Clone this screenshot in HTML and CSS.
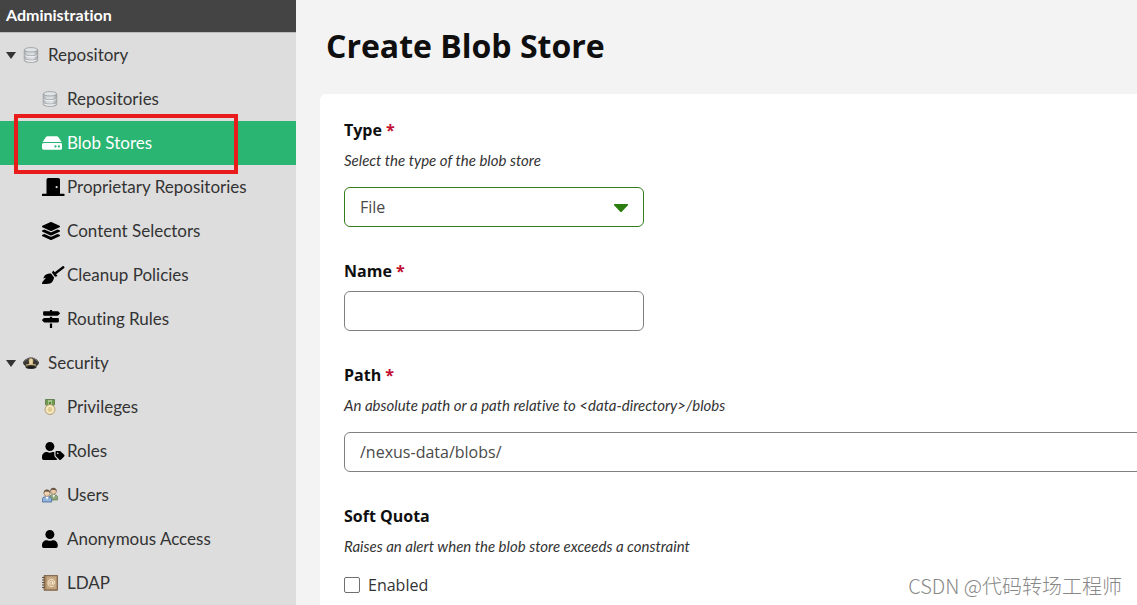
FILE: index.html
```html
<!DOCTYPE html>
<html lang="en">
<head>
<meta charset="utf-8">
<title>Create Blob Store</title>
<link rel="stylesheet" href="styles.css">
</head>
<body>
<svg class="defs" aria-hidden="true">
  <defs>
    <linearGradient id="metal" x1="0" x2="1"><stop offset="0" stop-color="#a9adb1"/><stop offset=".25" stop-color="#d3d7da"/><stop offset=".65" stop-color="#dfe2e5"/><stop offset="1" stop-color="#9b9fa3"/></linearGradient>
    <symbol id="database" viewBox="0 0 16 16">
      <path d="M1.2 3v10.200C1.200 16.300 14.800 16.300 14.800 13.200V3z" fill="url(#metal)" stroke="#96999c" stroke-width=".7"/>
      <path d="M1.500 7.200c1 2 12 2 13 0M1.500 11.500c1 2 12 2 13 0" fill="none" stroke="#a0a4a8" stroke-width=".8"/>
      <path d="M1.700 8.200c1 2 11.600 2 12.600 0M1.700 12.500c1 2 11.600 2 12.600 0" fill="none" stroke="#f5f6f7" stroke-width=".8"/>
      <ellipse cx="8" cy="2.800" rx="6.600" ry="2.200" fill="#e1e4e6" stroke="#96999c" stroke-width=".8"/>
    </symbol>
  </defs>
</svg>
<div class="shell">
  <nav class="sidebar" aria-labelledby="nav-title">
    <h2 class="sidebar-title" id="nav-title">Administration</h2>
    <ul class="tree">
      <li>
        <button class="row group" type="button" aria-expanded="true">
          <svg class="caret" viewBox="0 0 10 7"><path d="M0 0h10L5 7z"/></svg>
          <svg class="icon-small" viewBox="0 0 16 16"><use href="#database"/></svg>
          <span>Repository</span>
        </button>
        <ul class="tree">
          <li><a class="row item" href="#"><span class="slot"><svg class="icon-small" viewBox="0 0 16 16"><use href="#database"/></svg></span>Repositories</a></li>
          <li><a class="row item selected" href="#" aria-current="page"><span class="slot"><svg class="icon" viewBox="0 0 576 512"><path d="M576 304v96c0 26.510-21.490 48-48 48H48c-26.510 0-48-21.490-48-48v-96c0-26.510 21.490-48 48-48h480c26.510 0 48 21.490 48 48zm-48-80a79.557 79.557 0 0 1 30.777 6.165L462.250 85.374A48.003 48.003 0 0 0 422.311 64H153.689a48 48 0 0 0-39.938 21.374L17.223 230.165A79.557 79.557 0 0 1 48 224h480zm-48 96a32 32 0 1 0 0 64 32 32 0 0 0 0-64zm-96 0a32 32 0 1 0 0 64 32 32 0 0 0 0-64z"/></svg></span>Blob Stores</a></li>
          <li><a class="row item" href="#"><span class="slot"><svg class="icon" viewBox="0 0 640 512"><path d="M624 448H512V50.800C512 22.780 490.470 0 464 0H175.990c-26.470 0-48 22.780-48 50.800V448H16c-8.840 0-16 7.160-16 16v32c0 8.840 7.160 16 16 16h608c8.840 0 16-7.160 16-16v-32c0-8.840-7.160-16-16-16zM416 288a32 32 0 1 1 0-64 32 32 0 0 1 0 64z"/></svg></span>Proprietary Repositories</a></li>
          <li><a class="row item" href="#"><span class="slot"><svg class="icon" viewBox="0 0 512 512"><path d="M12.410 148.020l232.940 105.670c6.800 3.090 14.490 3.090 21.290 0l232.940-105.670c16.550-7.510 16.550-32.520 0-40.030L266.650 2.310a25.607 25.607 0 0 0-21.290 0L12.410 107.980c-16.550 7.510-16.550 32.530 0 40.040zm487.180 88.280l-58.090-26.330-161.640 73.270c-7.560 3.430-15.590 5.170-23.860 5.170s-16.290-1.740-23.860-5.170L70.510 209.970l-58.100 26.330c-16.550 7.500-16.550 32.500 0 40l232.940 105.590c6.800 3.080 14.490 3.080 21.290 0L499.590 276.300c16.550-7.500 16.550-32.500 0-40zm0 127.800l-57.870-26.230-161.860 73.370c-7.560 3.430-15.590 5.170-23.860 5.170s-16.290-1.740-23.860-5.170L70.290 337.870 12.410 364.100c-16.550 7.500-16.550 32.500 0 40l232.940 105.590c6.800 3.080 14.490 3.080 21.290 0L499.590 404.100c16.550-7.500 16.550-32.500 0-40z"/></svg></span>Content Selectors</a></li>
          <li><a class="row item" href="#"><span class="slot"><svg class="icon" viewBox="0 0 640 512"><path d="M256.470 216.770l86.730 109.180s-16.600 102.360-76.570 150.120C206.660 523.850 0 510.190 0 510.190s3.800-23.140 11-55.430l94.620-112.170c3.970-4.700-.870-11.620-6.650-9.500l-60.400 22.090c14.440-41.660 32.720-80.040 54.600-97.470 59.970-47.760 163.300-40.940 163.300-40.940zM636.530 31.030l-19.860-25c-5.490-6.900-15.520-8.050-22.410-2.560l-232.480 177.800-34.140-42.970c-5.090-6.410-15.140-5.210-18.590 2.210l-25.330 54.550 86.730 109.180 58.800-12.450c8-1.690 11.420-11.200 6.340-17.600l-34.090-42.920 232.480-177.800c6.890-5.480 8.040-15.530 2.550-22.440z"/></svg></span>Cleanup Policies</a></li>
          <li><a class="row item" href="#"><span class="slot"><svg class="icon" viewBox="0 0 512 512"><path d="M507.310 84.690L464 41.370c-6-6-14.140-9.370-22.630-9.370H288V16c0-8.840-7.160-16-16-16h-32c-8.840 0-16 7.160-16 16v16H56c-13.250 0-24 10.750-24 24v80c0 13.250 10.750 24 24 24h385.370c8.490 0 16.620-3.370 22.630-9.370l43.310-43.310c6.250-6.260 6.250-16.380 0-22.630zM224 496c0 8.840 7.160 16 16 16h32c8.840 0 16-7.160 16-16V384h-64v112zm232-272H288v-32h-64v32H70.630c-8.490 0-16.620 3.370-22.630 9.370L4.690 276.690c-6.250 6.250-6.250 16.380 0 22.630L48 342.630c6 6 14.140 9.370 22.630 9.370H456c13.250 0 24-10.750 24-24v-80c0-13.250-10.750-24-24-24z"/></svg></span>Routing Rules</a></li>
        </ul>
      </li>
      <li>
        <button class="row group" type="button" aria-expanded="true">
          <svg class="caret" viewBox="0 0 10 7"><path d="M0 0h10L5 7z"/></svg>
          <svg class="icon-small" viewBox="0 0 16 16">
            <path d="M0 7.500C1 4.500 5 2.500 8 2.500s7 2 8 5c0 2-1.500 3-2.500 3.500v1.500c-2 2-9 2-11 0V11C1.500 10.500 0 9.500 0 7.500z" fill="#3b3936"/>
            <path d="M1.500 6.500C3 4.500 5 3.500 7 3.300M9.500 3.300c2 .3 4 1.500 5 3.200" stroke="#77736e" fill="none"/>
            <path d="M3 9.500c3-1 7-1 10 0v1.300c-3-1-7-1-10 0z" fill="#c8ad72"/>
            <path d="M3.500 12.300c3-1.300 6-1.300 9 0-2.500 1.200-6.500 1.200-9 0z" fill="#171615"/>
            <path d="M8 3l2.300 1.800-.5 4.700H6.200l-.5-4.700z" fill="#d9c18b"/><path d="M8 4v5" stroke="#f6e9c4"/>
          </svg>
          <span>Security</span>
        </button>
        <ul class="tree">
          <li><a class="row item" href="#"><span class="slot"><svg class="icon-small" viewBox="0 0 16 16">
            <path d="M3.500.5h9v5.200L10 7H6L3.500 5.700z" fill="#6f9a50" stroke="#55753f" stroke-width=".8"/><path d="M6 1h4v4.500H6z" fill="#a4c587"/><path d="M7 3h2v3H7z" fill="#58863b"/>
            <circle cx="8" cy="10.500" r="5" fill="#ecdcae" stroke="#b19b70" stroke-width=".9"/><circle cx="8" cy="10.500" r="3.200" fill="#e2cb91" stroke="#fff5d5"/>
          </svg></span>Privileges</a></li>
          <li><a class="row item" href="#"><span class="slot"><svg class="icon" viewBox="0 0 640 512"><path d="M630.600 364.900l-90.300-90.200c-12-12-28.300-18.700-45.300-18.700h-79.300c-17.700 0-32 14.300-32 32v79.200c0 17 6.700 33.200 18.700 45.200l90.300 90.200c12.500 12.500 32.800 12.500 45.300 0l92.500-92.500c12.600-12.500 12.600-32.700.1-45.200zm-182.800-21c-13.300 0-24-10.700-24-24s10.700-24 24-24 24 10.700 24 24c0 13.200-10.700 24-24 24zm-223.800-88c70.700 0 128-57.300 128-128C352 57.300 294.700 0 224 0S96 57.300 96 128c0 70.600 57.300 127.900 128 127.900zm127.800 111.200V294c-12.200-3.600-24.900-6.200-38.200-6.200h-16.700c-22.200 10.200-46.900 16-72.900 16s-50.600-5.800-72.900-16h-16.700C60.200 287.900 0 348.100 0 422.300v41.600c0 26.500 21.500 48 48 48h352c15.500 0 29.100-7.500 37.900-18.900l-58-58c-18.100-18.100-28.100-42.200-28.100-67.900z"/></svg></span>Roles</a></li>
          <li><a class="row item" href="#"><span class="slot"><svg class="icon-small" viewBox="0 0 16 16">
            <path d="M7.500 13V9.500C8 7.500 14.500 7 15.500 9.500V13z" fill="#8fa87a" stroke="#637b52" stroke-width=".7"/><path d="M10.500 8l1.200 3L13 8z" fill="#f3f3ec"/>
            <circle cx="11.500" cy="4.300" r="2.900" fill="#e6c8a5" stroke="#8c6c50" stroke-width=".6"/><path d="M8.300 4.500C7.800-.5 15-.5 14.800 4.500L13.500 3 9.500 2.700z" fill="#655343"/>
            <path d="M.4 15v-3.500C1 9 9 9 9.700 11.500V15z" fill="#91b2da" stroke="#45689a" stroke-width=".8"/><path d="M3.600 9.600L5 13l1.500-3.400z" fill="#fff"/>
            <circle cx="5" cy="6.200" r="3.100" fill="#efd2af" stroke="#8c6c50" stroke-width=".6"/><path d="M1.700 6.500C1 1 8.800 1 8.300 6.500L7 4.700 3 4.500z" fill="#655343"/>
          </svg></span>Users</a></li>
          <li><a class="row item" href="#"><span class="slot"><svg class="icon" viewBox="0 0 448 512"><path d="M224 256c70.700 0 128-57.300 128-128S294.700 0 224 0 96 57.300 96 128s57.300 128 128 128zm89.600 32h-16.700c-22.200 10.200-46.900 16-72.900 16s-50.600-5.800-72.900-16h-16.700C60.200 288 0 348.200 0 422.400V464c0 26.500 21.500 48 48 48h352c26.500 0 48-21.500 48-48v-41.600c0-74.200-60.200-134.400-134.400-134.400z"/></svg></span>Anonymous Access</a></li>
          <li><a class="row item" href="#"><span class="slot"><svg class="icon-small" viewBox="0 0 16 16">
            <path d="M2 .5h13.500v14.800H2z" fill="#a58562" stroke="#765b40" stroke-width=".8"/><path d="M4.500 1.500h9.800v12.300H4.500z" fill="#c5a882"/>
            <path d="M0 2.500h3M0 5h3M0 7.500h3M0 10h3M0 12.500h3" stroke="#66523f" stroke-width="1.200"/>
            <circle cx="9.300" cy="7.800" r="1.500" fill="none" stroke="#fff1da"/><path d="M10.800 6.300v2.400c.2 1 1.800.8 1.800-1C12.500 3 6 3.200 6 7.900c0 3.500 3.500 4.300 5.500 3" fill="none" stroke="#fff1da" stroke-width=".9"/>
          </svg></span>LDAP</a></li>
        </ul>
      </li>
    </ul>
  </nav>
  <main class="content">
    <h1 class="page-title">Create Blob Store</h1>
    <form class="card">
      <div class="field">
        <label class="label" for="type">Type <span class="required">*</span></label>
        <p class="help" id="type-help">Select the type of the blob store</p>
        <div class="select-wrap">
          <select class="control select" id="type" aria-describedby="type-help"><option>File</option></select>
          <svg class="select-caret" viewBox="0 0 14 8" aria-hidden="true"><path d="M1 0h12q2 0 .7 1.500L8 7.500q-1 1-2 0L.3 1.500Q-1 0 1 0z"/></svg>
        </div>
      </div>
      <div class="field">
        <label class="label" for="name">Name <span class="required">*</span></label>
        <input class="control short" id="name" type="text">
      </div>
      <div class="field">
        <label class="label" for="path">Path <span class="required">*</span></label>
        <p class="help" id="path-help">An absolute path or a path relative to &lt;data-directory&gt;/blobs</p>
        <input class="control" id="path" type="text" value="/nexus-data/blobs/" aria-describedby="path-help">
      </div>
      <fieldset class="field">
        <legend class="label">Soft Quota</legend>
        <p class="help">Raises an alert when the blob store exceeds a constraint</p>
        <label class="check"><input class="checkbox" type="checkbox">Enabled</label>
      </fieldset>
    </form>
  </main>
  <div class="watermark">CSDN @代码转场工程师</div>
</div>
</body>
</html>
```
FILE: styles.css
```css
*,
*::after {
  box-sizing: border-box;
}

body {
  margin: 0;
  background: #f3f3f3;
  color: #0f0f0f;
  font: 16px/24px "Open Sans", "Noto Sans", sans-serif;
}

.defs {
  position: absolute;
  width: 0;
  height: 0;
}

.shell {
  position: relative;
  display: flex;
  min-height: 100vh;
  overflow: hidden;
}

/* Sidebar */
.sidebar {
  flex: 0 0 296px;
  background: #dddddd;
  font-family: Lato, "Open Sans", sans-serif;
  font-variant-ligatures: none;
}

.sidebar-title {
  margin: 0;
  padding: 0 6px 2px;
  background: #444444;
  border-bottom: 1px solid #bcbcbc;
  color: #ffffff;
  font-size: 16px;
  font-weight: 700;
  line-height: 30px;
}

.tree {
  margin: 0;
  padding: 0;
  list-style: none;
}

.row {
  display: flex;
  align-items: center;
  width: 100%;
  height: 44px;
  color: #333333;
  font-family: inherit;
  font-size: 17px;
  font-variant-ligatures: none;
  line-height: 24px;
  text-decoration: none;
}

.group {
  padding: 0 6px;
  border: 0;
  background: none;
  text-align: left;
}

.group .icon-small { margin: 0 9px 0 7px; }

.item { padding-left: 42px; }

.slot {
  display: flex;
  flex: 0 0 25px;
}

.selected {
  position: relative;
  background: #2ab573;
  color: #ffffff;
}

.selected::after {
  content: "";
  position: absolute;
  top: -7px;
  left: 14px;
  width: 224px;
  height: 60px;
  border: 4px solid #ea1b1b;
}

.caret {
  width: 10px;
  height: 7px;
  fill: #333333;
}

.icon {
  height: 18px;
  fill: #000000;
}

.selected .icon { fill: #ffffff; }

.icon-small {
  width: 16px;
  height: 16px;
}

/* Main */
.content {
  flex: 1;
  min-width: 0;
  padding-left: 24px;
}

.page-title {
  margin: 0;
  padding: 22px 6px 24px;
  font-size: 32px;
  line-height: 48px;
}

.card {
  display: flex;
  flex-direction: column;
  gap: 32px;
  margin-right: -48px;
  padding: 24px 24px 8px;
  min-height: calc(100vh - 94px);
  border-radius: 6px 6px 0 0;
  background: #ffffff;
}

.field {
  margin: 0;
  padding: 0;
  border: 0;
}

.label {
  display: block;
  margin-bottom: 8px;
  padding: 0;
  font-weight: 700;
}

.required { color: #c20d2f; }

.help {
  margin: 0 0 17px;
  color: #333333;
  font: italic 15px/20px Lato, "Open Sans", sans-serif;
  font-variant-ligatures: none;
}

.control {
  display: block;
  width: 100%;
  height: 40px;
  padding: 0 15px;
  border: 1px solid #808080;
  border-radius: 6px;
  background: #ffffff;
  color: #4a4a4a;
  font: inherit;
}

.short,
.select-wrap {
  width: 300px;
}

.select-wrap { position: relative; }

.select {
  appearance: none;
  border-color: #357d1b;
}

.select-caret {
  position: absolute;
  top: 17px;
  right: 16px;
  width: 14px;
  height: 8px;
  fill: #2a7d0e;
  pointer-events: none;
}

.check {
  display: flex;
  align-items: center;
  gap: 8px;
  color: #333333;
}

.checkbox {
  appearance: none;
  width: 16px;
  height: 16px;
  margin: 0;
  border: 1px solid #707070;
  border-radius: 2px;
  background: #ffffff;
}

.watermark {
  position: absolute;
  right: 15px;
  bottom: 7px;
  color: #888888;
  font: 300 20px/24px "Noto Sans CJK SC", sans-serif;
}
```
